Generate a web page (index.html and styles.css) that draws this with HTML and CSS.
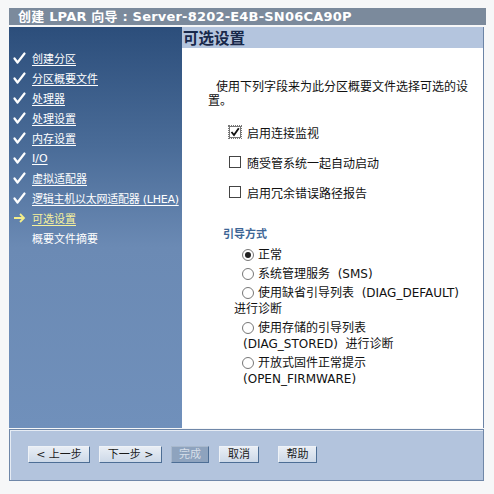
FILE: index.html
```html
<!DOCTYPE html>
<html>
<head>
<meta charset="utf-8">
<link rel="stylesheet" href="styles.css">
</head>
<body>
<div class="wizard">
  <div class="titlebar">创建 LPAR 向导 : Server-8202-E4B-SN06CA90P</div>
  <div class="main">
    <nav class="nav">
      <div class="item done"><svg class="ck" viewBox="0 0 13 12"><path d="M1.5 6.5 L4.5 10.5 L11.5 1.5" /></svg><a>创建分区</a></div>
      <div class="item done"><svg class="ck" viewBox="0 0 13 12"><path d="M1.5 6.5 L4.5 10.5 L11.5 1.5" /></svg><a>分区概要文件</a></div>
      <div class="item done"><svg class="ck" viewBox="0 0 13 12"><path d="M1.5 6.5 L4.5 10.5 L11.5 1.5" /></svg><a>处理器</a></div>
      <div class="item done"><svg class="ck" viewBox="0 0 13 12"><path d="M1.5 6.5 L4.5 10.5 L11.5 1.5" /></svg><a>处理设置</a></div>
      <div class="item done"><svg class="ck" viewBox="0 0 13 12"><path d="M1.5 6.5 L4.5 10.5 L11.5 1.5" /></svg><a>内存设置</a></div>
      <div class="item done"><svg class="ck" viewBox="0 0 13 12"><path d="M1.5 6.5 L4.5 10.5 L11.5 1.5" /></svg><a>I/O</a></div>
      <div class="item done"><svg class="ck" viewBox="0 0 13 12"><path d="M1.5 6.5 L4.5 10.5 L11.5 1.5" /></svg><a>虚拟适配器</a></div>
      <div class="item done"><svg class="ck" viewBox="0 0 13 12"><path d="M1.5 6.5 L4.5 10.5 L11.5 1.5" /></svg><a class="tight">逻辑主机以太网适配器 (LHEA)</a></div>
      <div class="item current"><svg class="ar" viewBox="0 0 13 12"><path d="M1 6 H11 M7 2 L11 6 L7 10" /></svg><a>可选设置</a></div>
      <div class="item todo"><span class="sp"></span><span>概要文件摘要</span></div>
    </nav>
    <section class="content">
      <h1 class="head">可选设置</h1>
      <div class="body">
        <p class="intro">使用下列字段来为此分区概要文件选择可选的设置。</p>
        <div class="checks">
          <div class="crow"><span class="cbox checked"><svg viewBox="0 0 12 12"><path d="M2.5 6 L5 9 L9.8 2.2" /></svg></span><span>启用连接监视</span></div>
          <div class="crow"><span class="cbox"></span><span>随受管系统一起自动启动</span></div>
          <div class="crow"><span class="cbox"></span><span>启用冗余错误路径报告</span></div>
        </div>
        <div class="boot">
          <div class="boot-title">引导方式</div>
          <div class="radios">
            <div class="ritem"><div class="rline"><span class="radio on"></span><span>正常</span></div></div>
            <div class="ritem"><div class="rline"><span class="radio"></span><span>系统管理服务&nbsp; (SMS)</span></div></div>
            <div class="ritem"><div class="rline"><span class="radio"></span><span>使用缺省引导列表&nbsp; (DIAG_DEFAULT)</span></div><div class="wrap-out">进行诊断</div></div>
            <div class="ritem"><div class="rline"><span class="radio"></span><span>使用存储的引导列表</span></div><div class="wrap">(DIAG_STORED)&nbsp; 进行诊断</div></div>
            <div class="ritem"><div class="rline"><span class="radio"></span><span>开放式固件正常提示</span></div><div class="wrap">(OPEN_FIRMWARE)</div></div>
          </div>
        </div>
      </div>
    </section>
  </div>
  <div class="footer">
    <button class="btn w62">&lt; 上一步</button>
    <button class="btn w63">下一步 &gt;</button>
    <button class="btn w38 disabled">完成</button>
    <button class="btn w40">取消</button>
    <button class="btn w39 help">帮助</button>
  </div>
</div>
</body>
</html>
```

FILE: styles.css
```css
html, body {
  margin: 0;
  padding: 0;
  background: #f6f7f8;
}
body {
  font-family: "DejaVu Sans", "Noto Sans CJK SC", sans-serif;
  color: #111;
}
.wizard {
  margin: 8px 0 0 9px;
  width: 477px;
}
.titlebar {
  height: 17px;
  line-height: 17px;
  background: #7b8a9c;
  color: #fff;
  font-weight: bold;
  font-size: 13px;
  padding-left: 9px;
  white-space: nowrap;
  letter-spacing: 0.2px;
}
.main {
  margin-top: 2px;
  width: 475px;
  height: 401px;
  display: flex;
}
.nav {
  width: 173px;
  flex: none;
  background: linear-gradient(to bottom, #2c4e7b 0%, #4a6c98 30%, #6b8ab4 55%, #7090bb 100%);
  padding-top: 21px;
  box-sizing: border-box;
}
.item {
  height: 20px;
  display: flex;
  align-items: center;
  font-size: 11px;
  color: #fff;
  white-space: nowrap;
}
.item a {
  text-decoration: underline;
  text-underline-offset: 2px;
}
.item a.tight {
  letter-spacing: -0.25px;
}
.ck, .ar, .sp {
  width: 13px;
  height: 12px;
  margin-left: 4px;
  margin-right: 6px;
  flex: none;
}
.ck path {
  fill: none;
  stroke: #fff;
  stroke-width: 2.2;
  stroke-linecap: round;
  stroke-linejoin: round;
}
.ar path {
  fill: none;
  stroke: #f4ee8a;
  stroke-width: 1.8;
}
.current {
  color: #f7f29c;
}
.content {
  flex: 1;
  background: #fff;
  border-right: 1px solid #6b84a6;
  display: flex;
  flex-direction: column;
}
.head {
  margin: 0;
  height: 21px;
  line-height: 21px;
  background: #b4c5de;
  color: #18284a;
  font-size: 15.5px;
  font-weight: bold;
  padding-left: 1px;
  font-family: "Noto Sans CJK SC", sans-serif;
}
.body {
  padding: 32px 10px 0 26px;
  font-size: 12px;
}
.intro {
  margin: 0;
  line-height: 14px;
  text-indent: 8px;
  width: 262px;
}
.checks {
  margin-top: 16px;
  padding-left: 21px;
  display: flex;
  flex-direction: column;
  gap: 14px;
}
.crow {
  display: flex;
  align-items: center;
  height: 16px;
}
.cbox {
  width: 10px;
  height: 10px;
  border: 1px solid #444;
  margin-right: 6px;
  position: relative;
  flex: none;
}
.cbox.checked {
  outline: 1px dotted #777;
  outline-offset: 0;
  border-color: #777;
}
.cbox svg {
  position: absolute;
  left: -1px;
  top: -1px;
  width: 12px;
  height: 12px;
}
.cbox svg path {
  fill: none;
  stroke: #111;
  stroke-width: 1.8;
}
.boot {
  margin-top: 25px;
  padding-left: 15px;
}
.boot-title {
  font-size: 11px;
  font-weight: bold;
  color: #3d6696;
  height: 16px;
  line-height: 16px;
  font-family: "Noto Sans CJK SC", sans-serif;
}
.radios {
  margin-top: 6px;
  display: flex;
  flex-direction: column;
  gap: 3px;
}
.ritem {
  line-height: 16px;
}
.rline {
  display: flex;
  align-items: center;
  padding-left: 19px;
  height: 16px;
  white-space: nowrap;
}
.radio {
  width: 10px;
  height: 10px;
  border: 1px solid #777;
  border-radius: 50%;
  margin-right: 4px;
  position: relative;
  flex: none;
  background: #fff;
}
.radio.on::after {
  content: "";
  position: absolute;
  left: 2px;
  top: 2px;
  width: 6px;
  height: 6px;
  border-radius: 50%;
  background: #222;
}
.wrap-out {
  padding-left: 11px;
}
.wrap {
  padding-left: 20px;
}
.footer {
  margin-top: 1px;
  width: 475px;
  height: 52px;
  box-sizing: border-box;
  background: #b3c4dd;
  border: 1px solid #6f87a8;
  box-shadow: inset 1px 1px 0 #e6ecf4;
  padding: 16px 0 0 18px;
  display: flex;
  align-items: flex-start;
  gap: 9px;
}
.btn {
  height: 17px;
  padding: 0;
  font-family: "DejaVu Sans", "Noto Sans CJK SC", sans-serif;
  font-size: 11px;
  color: #1a1a1a;
  background: linear-gradient(to bottom, #e9eef5, #cdd9e8);
  border: 1px solid;
  border-color: #eef2f7 #4d6e95 #4d6e95 #eef2f7;
  line-height: 15px;
  text-align: center;
}
.btn.disabled {
  background: #8ea3be;
  color: #d7dfe9;
  border-color: #a9b9cd #4d6e95 #4d6e95 #a9b9cd;
}
.w62 { width: 62px; }
.w63 { width: 63px; }
.w38 { width: 38px; }
.w40 { width: 40px; margin-left: 1px; }
.w39 { width: 39px; }
.help { margin-left: 10px; }
```
